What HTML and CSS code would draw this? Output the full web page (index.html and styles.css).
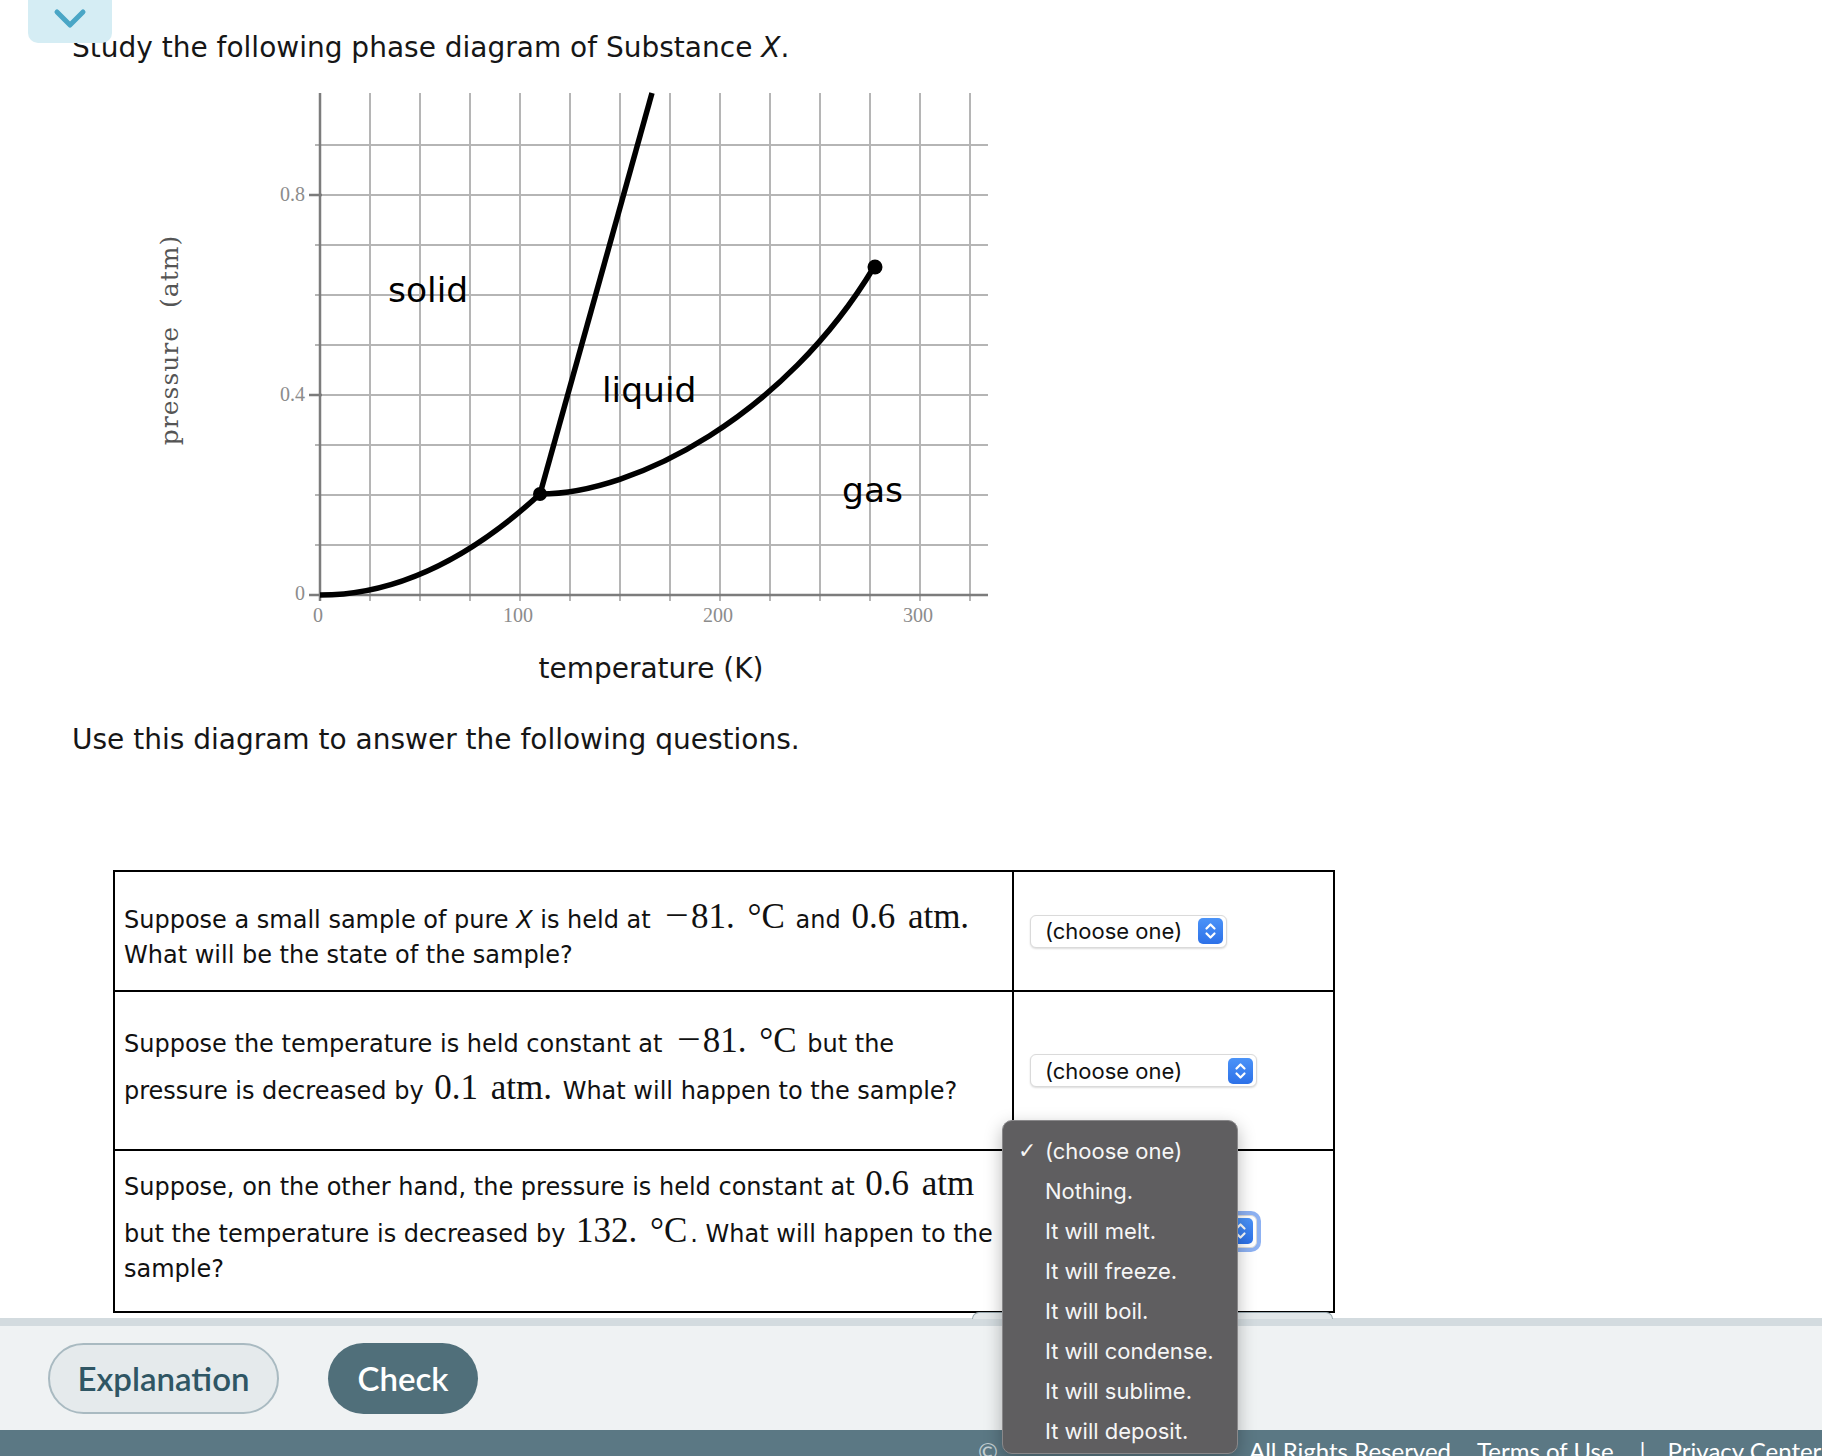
FILE: index.html
```html
<!DOCTYPE html>
<html lang="en">
<head>
    <meta charset="UTF-8">
    <meta name="viewport" content="width=device-width, initial-scale=1.0">
    <title>Phase diagram of Substance X</title>
    <link rel="stylesheet" href="styles.css">
</head>
<body>
    <button class="collapse" aria-label="Collapse">
        <svg width="84" height="43" viewBox="0 0 84 43"><polyline points="29,12 42,25 55,12" fill="none" stroke="#4aa6c6" stroke-width="5" stroke-linecap="round" stroke-linejoin="round"/></svg>
    </button>

    <main class="page">
        <p class="lead">Study the following phase diagram of Substance <i>X</i>.</p>

        <svg class="diagram" width="930" height="636" viewBox="72 64 930 636">
            <path class="grid" d="M370 93V601M420 93V601M470 93V601M520 93V601M570 93V601M620 93V601M670 93V601M720 93V601M770 93V601M820 93V601M870 93V601M920 93V601M970 93V601M315 545H988M315 495H988M315 445H988M309 395H988M315 345H988M315 295H988M315 245H988M309 195H988M315 145H988"/>
            <path class="axis" d="M320 93V601M309 595H988M309 395H322M309 195H322"/>

            <text class="tick" x="305" y="201" text-anchor="end">0.8</text>
            <text class="tick" x="305" y="401" text-anchor="end">0.4</text>
            <text class="tick" x="305" y="600" text-anchor="end">0</text>
            <text class="tick" x="318" y="622" text-anchor="middle">0</text>
            <text class="tick" x="518" y="622" text-anchor="middle">100</text>
            <text class="tick" x="718" y="622" text-anchor="middle">200</text>
            <text class="tick" x="918" y="622" text-anchor="middle">300</text>

            <text class="axis-title" transform="translate(178 340) rotate(-90)" text-anchor="middle">pressure  (atm)</text>
            <text class="axis-name" x="651" y="678" text-anchor="middle">temperature (K)</text>

            <path class="curve" d="M320 595Q430 595 540 494"/>
            <path class="curve" d="M540 494L652 93"/>
            <path class="curve" d="M540 494C635 494 785 415 874 267"/>
            <circle cx="540" cy="494" r="7"/>
            <circle cx="875" cy="267" r="7.5"/>

            <text class="region" x="388" y="302">solid</text>
            <text class="region" x="602" y="402">liquid</text>
            <text class="region" x="842" y="502">gas</text>
        </svg>

        <p class="lead after">Use this diagram to answer the following questions.</p>

        <div class="questions">
            <div class="q">Suppose a small sample of pure <i>X</i> is held at <span class="m"><span class="neg">−</span>81. °C</span> and <span class="m">0.6 atm.</span><br>What will be the state of the sample?</div>
            <div class="a">
                <div class="select"><span>(choose one)</span><span class="stepper"><svg width="25" height="26" viewBox="0 0 25 26"><path d="M8.5 10.5l4-4 4 4M8.5 15.5l4 4 4-4" fill="none" stroke="#fff" stroke-width="2.2" stroke-linecap="round" stroke-linejoin="round"/></svg></span></div>
            </div>

            <div class="q q-mid">Suppose the temperature is held constant at <span class="m"><span class="neg">−</span>81. °C</span> but the<br>pressure is decreased by <span class="m">0.1 atm.</span> What will happen to the sample?</div>
            <div class="a">
                <div class="select wide"><span>(choose one)</span><span class="stepper"><svg width="25" height="26" viewBox="0 0 25 26"><path d="M8.5 10.5l4-4 4 4M8.5 15.5l4 4 4-4" fill="none" stroke="#fff" stroke-width="2.2" stroke-linecap="round" stroke-linejoin="round"/></svg></span></div>
            </div>

            <div class="q q-tight">Suppose, on the other hand, the pressure is held constant at <span class="m">0.6 atm</span><br>but the temperature is decreased by <span class="m">132. °C</span>. What will happen to the<br>sample?</div>
            <div class="a">
                <div class="select wide focus"><span>(choose one)</span><span class="stepper"><svg width="25" height="26" viewBox="0 0 25 26"><path d="M8.5 10.5l4-4 4 4M8.5 15.5l4 4 4-4" fill="none" stroke="#fff" stroke-width="2.2" stroke-linecap="round" stroke-linejoin="round"/></svg></span></div>
            </div>
        </div>
    </main>

    <div class="actions">
        <span class="panel-edge"></span>
        <button class="btn btn-outline">Explanation</button>
        <button class="btn btn-solid">Check</button>
    </div>

    <footer class="footer">
        <span class="copy">©</span>
        <span class="link">All Rights Reserved</span>
        <span class="link">Terms of Use</span>
        <span class="sep">|</span>
        <span class="link">Privacy Center</span>
        <span class="sep">|</span>
        <span class="link">Accessibility</span>
    </footer>

    <ul class="menu">
        <li class="checked">(choose one)</li>
        <li>Nothing.</li>
        <li>It will melt.</li>
        <li>It will freeze.</li>
        <li>It will boil.</li>
        <li>It will condense.</li>
        <li>It will sublime.</li>
        <li>It will deposit.</li>
    </ul>
</body>
</html>
```

FILE: styles.css
```css
* {
    box-sizing: border-box;
}
html, body {
    margin: 0;
    height: 100%;
    overflow: hidden;
}
body {
    position: relative;
    display: flex;
    flex-direction: column;
    background-color: #ffffff;
    color: #161616;
    font-family: "DejaVu Sans", Verdana, sans-serif;
}

.collapse {
    position: absolute;
    left: 28px;
    top: 0;
    z-index: 2;
    width: 84px;
    height: 43px;
    padding: 0;
    border: 0;
    border-radius: 0 0 10px 10px;
    background-color: #d5edf4;
}
.collapse svg {
    display: block;
}

.page {
    flex: 1;
    min-height: 0;
    padding: 32px 0 0 72px;
}
.lead {
    margin: 0;
    font-size: 28px;
    line-height: 32px;
}
.lead.after {
    margin-top: 24px;
}

/* phase diagram */
.diagram {
    display: block;
}
.grid {
    fill: none;
    stroke: #b5b5b5;
    stroke-width: 2;
}
.axis {
    fill: none;
    stroke: #7c7c7c;
    stroke-width: 2.5;
}
.curve {
    fill: none;
    stroke: #000;
    stroke-width: 5.5;
}
.tick {
    font-family: "Liberation Serif", "Times New Roman", serif;
    font-size: 20px;
    fill: #8c8c8c;
}
.axis-title {
    font-family: "DejaVu Serif", serif;
    font-size: 25px;
    letter-spacing: 1px;
    white-space: pre;
    fill: #555;
}
.axis-name {
    font-size: 28px;
    fill: #161616;
}
.region {
    font-size: 34.5px;
    fill: #000;
}

/* question table */
.questions {
    display: grid;
    grid-template-columns: 897px 319px;
    grid-template-rows: 118px 157px 160px;
    gap: 2px;
    width: 1222px;
    margin: 114px 0 0 41px;
    padding: 2px;
    background-color: #000;
}
.q {
    padding: 19px 8px 0 9px;
    background-color: #fff;
    color: #111;
    font-size: 24px;
    line-height: 35px;
    white-space: nowrap;
}
.q-mid {
    padding-top: 23px;
}
.q-tight {
    padding-top: 7px;
}
.m {
    display: inline-block;
    margin: 0 3px;
    padding-top: 8px;
    font-family: "Liberation Serif", "Times New Roman", serif;
    font-size: 35px;
    line-height: 36px;
    word-spacing: 4px;
}
.neg {
    display: inline-block;
    margin: 0 4px 0 6px;
    transform: translateY(-1px) scaleX(1.2);
}
.a {
    display: flex;
    align-items: center;
    padding-left: 16px;
    background-color: #fff;
}
.select {
    display: flex;
    align-items: center;
    justify-content: space-between;
    width: 197px;
    height: 33px;
    padding: 0 3px 0 14px;
    border: 1px solid #dadada;
    border-radius: 6px;
    background-color: #fff;
    box-shadow: 0 1px 2px rgba(0, 0, 0, 0.14);
    font-family: Inter, "Noto Sans", sans-serif;
    font-size: 22px;
    color: #111;
}
.select.wide {
    width: 227px;
}
.select.focus {
    box-shadow: 0 0 0 4px #8db1f2;
}
.stepper {
    display: flex;
    width: 25px;
    height: 26px;
    border-radius: 5px;
    background: linear-gradient(#4b93f8, #2d71e8);
}

/* bottom bar */
.actions {
    position: relative;
    flex: none;
    display: flex;
    align-items: center;
    gap: 49px;
    height: 112px;
    padding-left: 48px;
    border-top: 8px solid #d3dbdf;
    background-color: #eff2f3;
}
.panel-edge {
    position: absolute;
    left: 972px;
    top: -14px;
    width: 361px;
    height: 7px;
    border: 1px solid #94a4ab;
    border-bottom: 0;
    border-radius: 10px 10px 0 0;
    background-color: #e2e7e9;
}
.btn {
    height: 71px;
    padding: 0;
    border-radius: 36px;
    font-family: Lato, "Open Sans", sans-serif;
    font-size: 33px;
    font-weight: 600;
}
.btn-outline {
    width: 231px;
    border: 2px solid #a9bac1;
    background-color: #e5eaec;
    color: #2f5664;
}
.btn-solid {
    width: 150px;
    border: 0;
    background-color: #506f7a;
    color: #fff;
}

.footer {
    flex: none;
    display: flex;
    height: 26px;
    overflow: hidden;
    padding: 8px 0 0 978px;
    background-color: #5b7884;
    color: #fff;
    font-family: Lato, "Open Sans", sans-serif;
    font-size: 24px;
    line-height: 26px;
    white-space: nowrap;
}
.copy {
    flex: none;
    width: 271px;
    color: #c3cfd3;
}
.link {
    margin-right: 26px;
}
.sep {
    margin-right: 22px;
}

/* open dropdown */
.menu {
    position: absolute;
    left: 1002px;
    top: 1120px;
    z-index: 3;
    width: 236px;
    height: 334px;
    margin: 0;
    padding: 10px 0 0;
    list-style: none;
    border: 1px solid #89888a;
    border-radius: 10px;
    background-color: #5f5e60;
    box-shadow: 0 6px 18px rgba(0, 0, 0, 0.28);
    font-family: Inter, "Noto Sans", sans-serif;
    font-size: 22px;
    color: #f6f6f6;
}
.menu li {
    position: relative;
    height: 40px;
    padding-left: 42px;
    line-height: 40px;
}
.menu .checked::before {
    content: "✓";
    position: absolute;
    left: 15px;
    font-family: "DejaVu Sans", sans-serif;
    font-size: 22px;
}
```
